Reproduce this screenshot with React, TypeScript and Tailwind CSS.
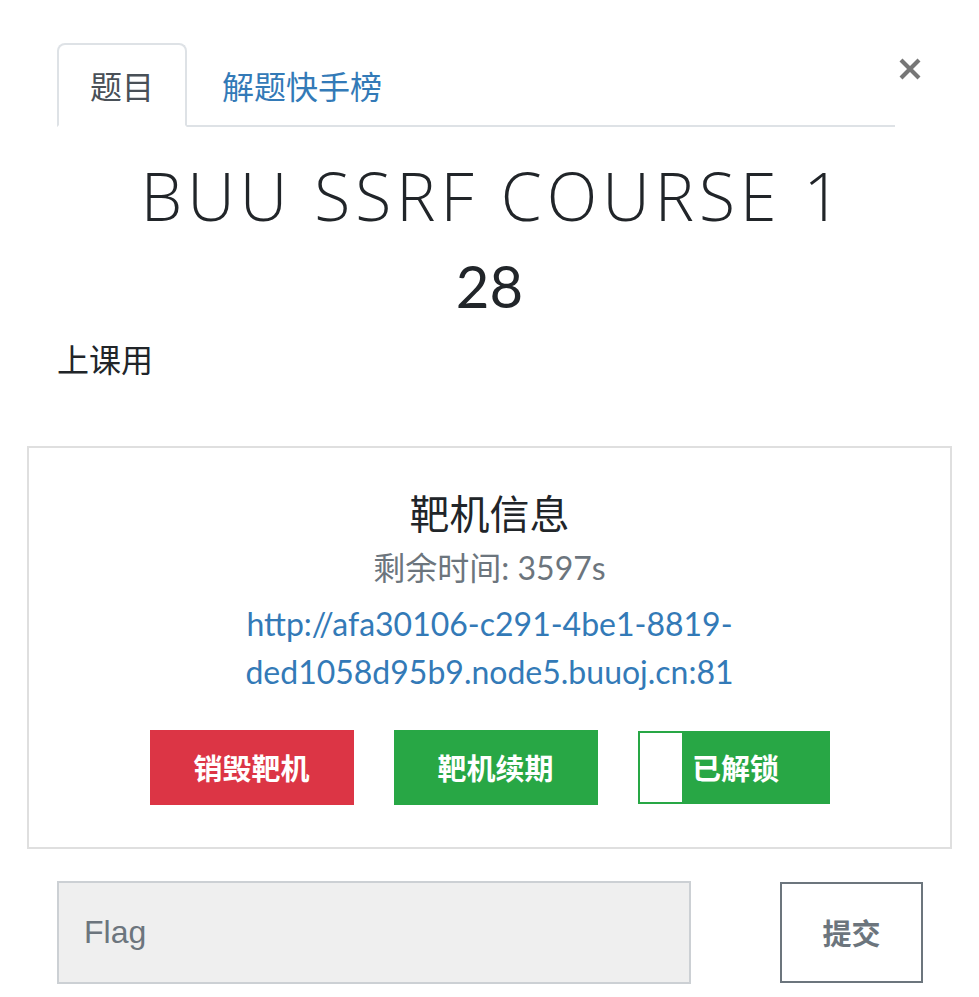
import React, { useState } from 'react';

const cjk = '"Noto Sans CJK SC", sans-serif';

const App: React.FC = () => {
  const [tab, setTab] = useState<'info' | 'rank'>('info');
  const [flag, setFlag] = useState('');

  const tabClass = (active: boolean) =>
    `-mb-[2px] h-[84px] pt-[4px] text-[32px] leading-[48px] rounded-t-[8px] border-2 ${
      active ? 'border-[#dee2e6] border-b-white bg-white text-[#495057]' : 'border-transparent text-[#337ab7]'
    }`;

  return (
    <div className="min-h-screen bg-white" style={{ fontFamily: `Lato, ${cjk}` }}>
      {/* header: tabs + close */}
      <div className="flex items-start pt-[43px] pl-[57px]">
        <div className="flex w-[838px] border-b-2 border-[#dee2e6]">
          <button onClick={() => setTab('info')} className={`w-[130px] ${tabClass(tab === 'info')}`}>
            题目
          </button>
          <button onClick={() => setTab('rank')} className={`px-[33px] ${tabClass(tab === 'rank')}`}>
            解题快手榜
          </button>
        </div>
        <button className="ml-[2px] mt-[8px] w-[26px] h-[36px] flex items-center justify-center text-[#777]">
          <svg width="22" height="22" viewBox="0 0 22 22">
            <path d="M2 2 L20 20 M20 2 L2 20" stroke="currentColor" strokeWidth="4.2" />
          </svg>
        </button>
      </div>

      {/* challenge title */}
      <h1
        className="mt-[28px] pl-[8px] text-center text-[#212529] text-[66px] leading-[80px] font-light tracking-[5px]"
        style={{ fontFamily: '"Open Sans", sans-serif' }}
      >
        BUU SSRF COURSE 1
      </h1>
      <div className="mt-[16px] text-center text-[#212529] text-[58px] leading-[70px]">28</div>

      <p className="mt-[13px] px-[57px] text-[32px] leading-[48px] text-[#212529]" style={{ fontFamily: cjk }}>
        上课用
      </p>

      {/* instance box */}
      <div className="mx-[27px] mt-[64px] border-2 border-[#dfdfdf] pt-[38px] pb-[42px] flex flex-col items-center">
        <div className="text-[40px] leading-[56px] text-[#212529]">靶机信息</div>
        <div className="mt-[2px] text-[32px] leading-[48px] text-[#6c757d]">剩余时间: 3597s</div>
        <a
          href="#"
          className="mt-[8px] w-[500px] text-center text-[32px] leading-[48px] text-[#337ab7] break-all"
        >
          http://afa30106-c291-4be1-8819-ded1058d95b9.node5.buuoj.cn:81
        </a>
        <div className="mt-[34px] flex items-center gap-[40px]" style={{ fontFamily: cjk }}>
          <button className="w-[204px] h-[75px] bg-[#dc3545] text-white text-[29px] font-bold">销毁靶机</button>
          <button className="w-[204px] h-[75px] bg-[#28a745] text-white text-[29px] font-bold">靶机续期</button>
          <button className="w-[192px] h-[73px] border-2 border-[#28a745] bg-[#28a745] flex">
            <span className="w-[42px] h-full bg-white" />
            <span className="flex-1 flex items-center justify-center text-white text-[29px] font-bold pr-[38px]">已解锁</span>
          </button>
        </div>
      </div>

      {/* flag submit */}
      <div className="mt-[32px] flex items-center pl-[57px]">
        <input
          value={flag}
          onChange={(e) => setFlag(e.target.value)}
          placeholder="Flag"
          className="w-[634px] h-[103px] bg-[#efefef] border-2 border-[#ccd0d4] px-[25px] text-[32px] text-[#495057] placeholder:text-[#6c757d] outline-none"
          style={{ fontFamily: '"Liberation Sans", sans-serif' }}
        />
        <button
          className="ml-[89px] w-[143px] h-[101px] border-2 border-[#6c757d] text-[#6c757d] text-[29px] font-bold"
          style={{ fontFamily: cjk }}
        >
          提交
        </button>
      </div>
    </div>
  );
};

export default App;
